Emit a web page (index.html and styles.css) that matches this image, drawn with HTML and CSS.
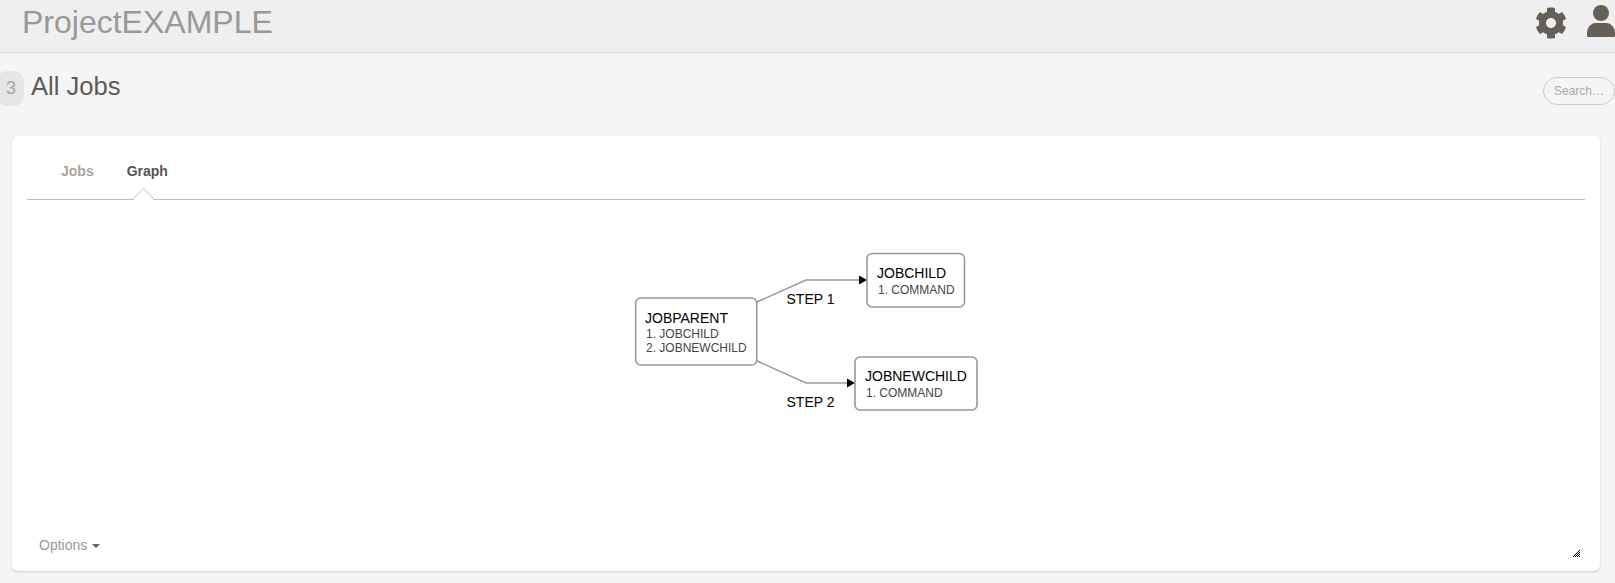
FILE: index.html
```html
<!DOCTYPE html>
<html lang="en">
<head>
    <meta charset="UTF-8">
    <title>ProjectEXAMPLE</title>
    <link rel="stylesheet" href="styles.css">
</head>
<body>
    <header class="topbar">
        <div class="brand">ProjectEXAMPLE</div>
        <div class="topbar-icons">
            <svg class="icon-gear" viewBox="0 0 512 512">
                <path d="M487.4 315.7l-42.6-24.6c4.3-23.2 4.3-47 0-70.2l42.6-24.6c4.9-2.8 7.1-8.6 5.5-14-11.1-35.6-30-67.8-54.7-94.6-3.8-4.1-10-5.1-14.8-2.3L380.8 110c-17.9-15.4-38.5-27.3-60.8-35.1V25.8c0-5.6-3.9-10.5-9.4-11.7-36.7-8.2-74.3-7.8-109.2 0-5.5 1.2-9.4 6.1-9.4 11.7V75c-22.2 7.9-42.8 19.8-60.8 35.1L88.7 85.5c-4.9-2.8-11-1.9-14.8 2.3-24.7 26.7-43.6 58.9-54.7 94.6-1.7 5.4.6 11.2 5.5 14L67.3 221c-4.3 23.2-4.3 47 0 70.2l-42.6 24.6c-4.9 2.8-7.1 8.6-5.5 14 11.1 35.6 30 67.8 54.7 94.6 3.8 4.1 10 5.1 14.8 2.3l42.6-24.6c17.9 15.4 38.5 27.3 60.8 35.1v49.2c0 5.6 3.9 10.5 9.4 11.7 36.7 8.2 74.3 7.8 109.2 0 5.5-1.2 9.4-6.1 9.4-11.7v-49.2c22.2-7.9 42.8-19.8 60.8-35.1l42.6 24.6c4.9 2.8 11 1.9 14.8-2.3 24.7-26.7 43.6-58.9 54.7-94.6 1.5-5.5-.7-11.3-5.6-14.1zM256 336c-44.1 0-80-35.9-80-80s35.9-80 80-80 80 35.9 80 80-35.9 80-80 80z"/>
            </svg>
            <svg class="icon-user" viewBox="0 0 28 32">
                <circle cx="14" cy="8" r="8"/>
                <path d="M0 29C0 22 4 18 9 18H19C24 18 28 22 28 29V30.500A1.500 1.500 0 0 1 26.500 32H1.500A1.500 1.500 0 0 1 0 30.500Z"/>
            </svg>
        </div>
    </header>

    <div class="page-head">
        <div class="page-title">
            <span class="count">3</span>
            <h1>All Jobs</h1>
        </div>
        <input class="search" type="text" placeholder="Search…">
    </div>

    <main class="card">
        <ul class="tabs">
            <li class="tab">Jobs</li>
            <li class="tab active">Graph</li>
        </ul>
        <div class="graph-wrap">
            <svg class="graph" width="344" height="160" viewBox="634 252 344 160">
                <polyline class="edge" points="757,302 806,280 860,280"/>
                <polygon points="859,275.500 867,280 859,284.500"/>
                <polyline class="edge" points="757,361 806,383 848,383"/>
                <polygon points="847,378.500 855,383 847,387.500"/>
                <text class="step" x="786.500" y="304">STEP 1</text>
                <text class="step" x="786.500" y="407">STEP 2</text>

                <rect class="node" x="635.700" y="298" width="121" height="67" rx="5"/>
                <text class="node-name" x="645" y="323">JOBPARENT</text>
                <text class="node-item" x="646" y="338">1. JOBCHILD</text>
                <text class="node-item" x="646" y="352">2. JOBNEWCHILD</text>

                <rect class="node" x="867" y="253.500" width="97.500" height="53.500" rx="5"/>
                <text class="node-name" x="877" y="278">JOBCHILD</text>
                <text class="node-item" x="878" y="294">1. COMMAND</text>

                <rect class="node" x="855" y="357" width="122" height="53" rx="5"/>
                <text class="node-name" x="865" y="381">JOBNEWCHILD</text>
                <text class="node-item" x="866" y="397">1. COMMAND</text>
            </svg>
        </div>
        <div class="options">Options <span class="caret"></span></div>
        <svg class="grip" width="8" height="8" viewBox="0 0 8 8">
            <pattern id="dither" width="2" height="2" patternUnits="userSpaceOnUse">
                <rect x="0" y="0" width="1" height="1"/>
                <rect x="1" y="1" width="1" height="1"/>
            </pattern>
            <polygon points="0,8 8,0 8,8" fill="url(#dither)"/>
        </svg>
    </main>
</body>
</html>
```

FILE: styles.css
```css
* {
    box-sizing: border-box;
}

html, body {
    height: 100%;
}

body {
    margin: 0;
    background: #f5f5f5;
    font-family: "Liberation Sans", Arial, sans-serif;
    color: #5f5a55;
    overflow: hidden;
}

/* Top bar */
.topbar {
    display: flex;
    justify-content: space-between;
    height: 53px;
    padding-left: 22px;
    background: #efefef;
    border-bottom: 1px solid #d6d6d6;
}

.brand {
    font-size: 32px;
    line-height: 44px;
    color: #999999;
}

.topbar-icons {
    display: flex;
    align-items: flex-start;
    gap: 20px;
}

.topbar-icons svg {
    fill: #655f57;
}

.icon-gear {
    width: 32px;
    height: 32px;
    margin-top: 7px;
}

.icon-user {
    width: 28px;
    height: 32px;
    margin-top: 5px;
}

/* Title row */
.page-head {
    display: flex;
    justify-content: space-between;
    height: 83px;
    padding-top: 18px;
}

.page-title {
    display: flex;
    align-items: flex-start;
    gap: 7px;
}

.count {
    width: 27px;
    height: 35px;
    margin-left: -3px;
    padding-left: 1px;
    border-radius: 10px;
    background: #e6e6e6;
    color: #a5a5a5;
    font-size: 18px;
    line-height: 35px;
    text-align: center;
}

.page-title h1 {
    margin: 1px 0 0;
    font-size: 25.600px;
    font-weight: normal;
    line-height: 29px;
}

.search {
    width: 72px;
    height: 28px;
    margin: 6px 0 0 0;
    padding: 0 10px;
    background: transparent;
    border: 1px solid #cfcdc8;
    border-radius: 14px;
    font-family: inherit;
    font-size: 12px;
}

.search::placeholder {
    color: #aaaaaa;
    opacity: 1;
}

/* Card */
.card {
    position: relative;
    height: 435px;
    margin: 0 15px 0 12px;
    padding: 0 15px;
    background: #ffffff;
    border-radius: 6px;
    box-shadow: 0 1px 2px rgba(0, 0, 0, 0.18);
}

.tabs {
    display: flex;
    height: 64px;
    margin: 0;
    padding: 0 0 0 18px;
    list-style: none;
    border-bottom: 1px solid #bbbbbb;
}

.tab {
    position: relative;
    padding: 27px 16px 0;
    font-size: 14px;
    font-weight: bold;
    line-height: 16px;
    color: #aaa59c;
}

.tab:first-child {
    padding-right: 17px;
}

.tab.active {
    color: #555555;
}

.tab.active::after {
    content: "";
    position: absolute;
    left: 50%;
    bottom: -7px;
    width: 14px;
    height: 14px;
    margin-left: -11px;
    background: #ffffff;
    border-top: 1px solid #cccccc;
    border-left: 1px solid #cccccc;
    transform: rotate(45deg);
}

.graph-wrap {
    height: 357px;
    padding-top: 52px;
}

.graph {
    display: block;
    margin: 0 auto;
}

.edge {
    fill: none;
    stroke: #999999;
    stroke-width: 1.500;
}

.node {
    fill: #ffffff;
    stroke: #999999;
    stroke-width: 1.600;
}

.node-name, .step {
    font-size: 14px;
    fill: #000000;
}

.node-item {
    font-size: 12px;
    fill: #444444;
}

.options {
    position: absolute;
    left: 27px;
    bottom: 18px;
    font-size: 14px;
    line-height: 16px;
    color: #999999;
}

.caret {
    display: inline-block;
    margin-left: 1px;
    vertical-align: middle;
    border-top: 4px solid #655f57;
    border-left: 4px solid transparent;
    border-right: 4px solid transparent;
}

.grip {
    position: absolute;
    right: 20px;
    bottom: 14px;
}
```
